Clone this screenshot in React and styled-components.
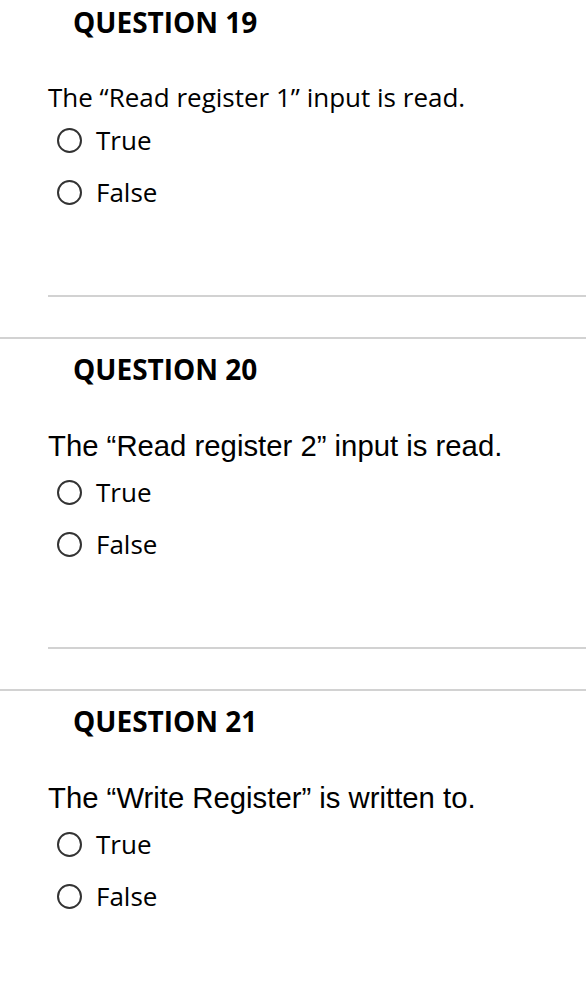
import React from "react";
import styled, { createGlobalStyle } from "styled-components";

const Global = createGlobalStyle`
  html, body { margin: 0; padding: 0; background: #fff; }
  body { font-family: "Open Sans", sans-serif; color: #000; }
`;

const Page = styled.div`
  width: 586px;
  display: flex;
  flex-direction: column;
`;

const Block = styled.section`
  display: flex;
  flex-direction: column;
  border-top: ${(p) => (p.$first ? "none" : "2px solid #d2d2d2")};
  padding-top: ${(p) => (p.$first ? "0px" : "8px")};
`;

const Inner = styled.div`
  padding-left: 48px;
  display: flex;
  flex-direction: column;
`;

const Heading = styled.h2`
  margin: 0 0 0 25px;
  font-family: "Open Sans", sans-serif;
  font-weight: 700;
  font-size: 28px;
  line-height: 44px;
  letter-spacing: 0;
`;

const Prompt = styled.p`
  margin: ${(p) => (p.$arial ? "37px" : "35px")} 0 0 0;
  font-family: ${(p) => (p.$arial ? '"Liberation Sans", Arial, sans-serif' : '"Open Sans", sans-serif')};
  font-size: ${(p) => (p.$arial ? "29.3px" : "26px")};
  line-height: 36px;
`;

const Options = styled.div`
  display: flex;
  flex-direction: column;
  gap: 16px;
  margin-top: ${(p) => (p.$arial ? "10px" : "7px")};
  padding-left: 9px;
`;

const Option = styled.label`
  display: flex;
  align-items: center;
  gap: 14px;
  font-family: "Open Sans", sans-serif;
  font-size: 26px;
  line-height: 36px;
  height: 36px;
`;

const Radio = styled.span`
  width: 21px;
  height: 21px;
  border: 2.5px solid #333;
  border-radius: 50%;
  flex: none;
`;

const Divider = styled.hr`
  margin: 85px 0 40px 0;
  border: none;
  border-top: 2px solid #d2d2d2;
  height: 0;
`;

const questions = [
  { n: 19, text: "The \u201CRead register 1\u201D input is read.", arial: false },
  { n: 20, text: "The \u201CRead register 2\u201D input is read.", arial: true },
  { n: 21, text: "The \u201CWrite Register\u201D is written to.", arial: true },
];

export default function App() {
  return (
    <Page>
      <Global />
      {questions.map((q, i) => (
        <Block key={q.n} $first={i === 0}>
          <Inner>
            <Heading>QUESTION {q.n}</Heading>
            <Prompt $arial={q.arial}>{q.text}</Prompt>
            <Options $arial={q.arial}>
              <Option><Radio />True</Option>
              <Option><Radio />False</Option>
            </Options>
            {i < questions.length - 1 && <Divider />}
          </Inner>
        </Block>
      ))}
    </Page>
  );
}
